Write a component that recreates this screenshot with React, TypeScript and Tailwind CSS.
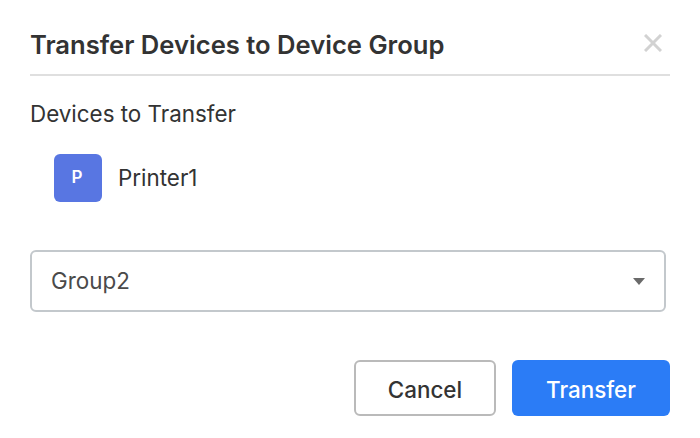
export default function App() {
  return (
    <div className="flex h-[438px] w-[700px] flex-col bg-white px-[30px] font-['Inter',sans-serif]">
      <div className="flex h-[76px] items-center justify-between border-b-2 border-[#dfdfdf] pt-[16px]">
        <h1 className="text-[25.6px] leading-[30px] font-semibold text-[#333]">Transfer Devices to Device Group</h1>
        <svg width="18" height="18" viewBox="0 0 18 18" className="mr-[8px] mb-[4px]" fill="none">
          <path d="M1 1 17 17M17 1 1 17" stroke="#d2d2d2" strokeWidth="3" />
        </svg>
      </div>
      <p className="mt-[25px] text-[22.4px] leading-[26px] text-[#333]">Devices to Transfer</p>
      <div className="mt-[27px] ml-[24px] flex items-center gap-[16px]">
        <div className="flex h-[48px] w-[48px] items-center justify-center rounded-[6px] bg-[#5876e2] pr-[2px] text-[17px] font-semibold text-white">
          P
        </div>
        <span className="text-[22.4px] text-[#333]">Printer1</span>
      </div>
      <div className="mt-[48px] mr-[4px] flex h-[62px] items-center justify-between rounded-[6px] border-2 border-[#c3c8cc] pr-[19px] pl-[19px]">
        <span className="text-[22.4px] text-[#4a4a4a]">Group2</span>
        <svg width="12" height="7" viewBox="0 0 12 7">
          <path d="M0 0H12L6 7Z" fill="#6a6a6a" />
        </svg>
      </div>
      <div className="mt-[48px] flex justify-end gap-[16px]">
        <button className="h-[56px] w-[142px] rounded-[6px] border-2 border-[#bababa] bg-white pt-[3px] text-[22.4px] font-medium text-[#333]">
          Cancel
        </button>
        <button className="h-[56px] w-[158px] rounded-[6px] bg-[#2b7cf6] pt-[3px] text-[22.4px] font-medium text-white">
          Transfer
        </button>
      </div>
    </div>
  );
}
